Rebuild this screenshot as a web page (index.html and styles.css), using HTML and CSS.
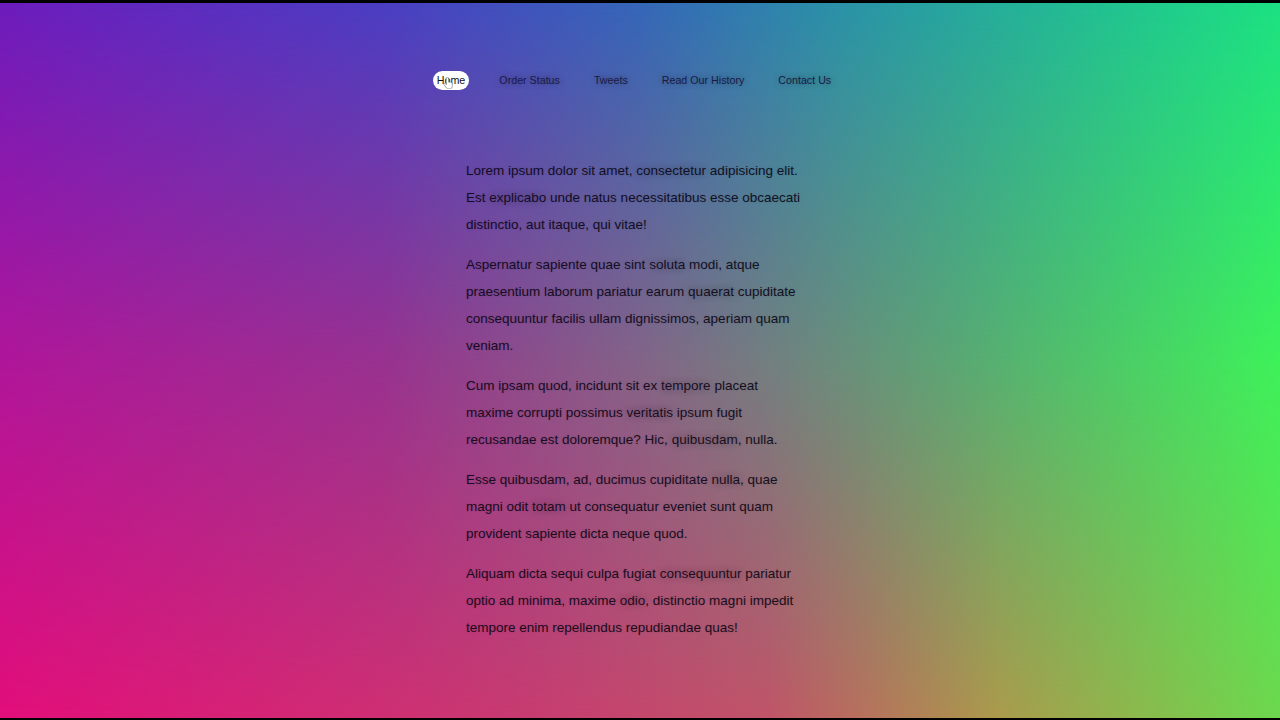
FILE: index.html
```html
<!DOCTYPE html>
<html lang="en">
<head>
<meta charset="utf-8">
<title>Home</title>
<link rel="stylesheet" href="styles.css">
</head>
<body>
<div class="frame">
  <nav class="nav">
    <a class="link active" href="#">Home<svg class="cursor" viewBox="0 0 12 14" width="10" height="12"><path d="M4 1.5c0-.8.6-1.5 1.3-1.5S6.6.7 6.6 1.5V6c.3-.4 1.3-.4 1.6.2.4-.3 1.3-.3 1.6.3.5-.2 1.3 0 1.3.8V11c0 1.8-1.3 3-3 3H6.3c-.9 0-1.6-.4-2.1-1.1L1.3 9c-.4-.6-.2-1.3.4-1.5.5-.2 1 0 1.3.4L4 9V1.5z" fill="#fff" stroke="#666" stroke-width=".7"/></svg></a>
    <a class="link" href="#">Order Status</a>
    <a class="link" href="#">Tweets</a>
    <a class="link" href="#">Read Our History</a>
    <a class="link" href="#">Contact Us</a>
  </nav>
  <main class="content">
    <p>Lorem ipsum dolor sit amet, <span class="hl">consectetur</span> adipisicing elit. Est <span class="hl">explicabo</span> unde natus necessitatibus esse obcaecati distinctio, aut itaque, qui vitae!</p>
    <p>Aspernatur sapiente quae sint <span class="hl">soluta</span> modi, atque praesentium laborum pariatur earum <span class="hl">quaerat</span> cupiditate consequuntur facilis ullam dignissimos, aperiam quam veniam.</p>
    <p>Cum ipsam quod, incidunt sit ex <span class="hl">tempore</span> placeat maxime corrupti possimus <span class="hl">veritatis</span> ipsum fugit recusandae est doloremque? Hic, <span class="hl">quibusdam</span>, nulla.</p>
    <p>Esse quibusdam, ad, ducimus cupiditate <span class="hl">nulla</span>, quae magni odit <span class="hl">totam</span> ut consequatur eveniet sunt quam provident sapiente dicta neque quod.</p>
    <p>Aliquam dicta sequi culpa fugiat <span class="hl">consequuntur</span> pariatur optio ad minima, maxime <span class="hl">odio</span>, distinctio magni impedit tempore enim repellendus repudiandae quas!</p>
  </main>
</div>
</body>
</html>
```

FILE: styles.css
```css
html, body {
  margin: 0;
  padding: 0;
  height: 100%;
}

body {
  background: #000;
  font-family: "Liberation Sans", Arial, sans-serif;
}

.frame {
  box-sizing: border-box;
  height: 720px;
  border-top: 3px solid #000;
  border-bottom: 2px solid #000;
  padding-right: 12px;
  position: relative;
  overflow: hidden;
  background: linear-gradient(to right, #b0169a 0%, #983290 30%, #836488 50%, #5aa874 75%, #3ef25a 100%);
}

.frame::before,
.frame::after {
  content: "";
  position: absolute;
  inset: 0;
  pointer-events: none;
}

.frame::before {
  background: linear-gradient(to right, #6c1cbc 0%, #4a3ec2 30%, #3466b8 50%, #2a90a8 65%, #1ce082 100%);
  -webkit-mask-image: linear-gradient(to bottom, #000 0%, transparent 50%);
  mask-image: linear-gradient(to bottom, #000 0%, transparent 50%);
}

.frame::after {
  background: linear-gradient(to right, #e20e7a 0%, #c83a70 40%, #c05468 60%, #aa9a4c 78%, #6cd84e 100%);
  -webkit-mask-image: linear-gradient(to bottom, transparent 50%, #000 100%);
  mask-image: linear-gradient(to bottom, transparent 50%, #000 100%);
}

.nav {
  position: relative;
  z-index: 1;
  display: flex;
  justify-content: center;
  gap: 26px;
  padding-top: 68px;
}

.link {
  position: relative;
  display: block;
  padding: 3px 4px;
  font-size: 10.7px;
  line-height: 13px;
  color: #1a1a44;
  text-decoration: none;
  border-radius: 10px;
  text-shadow: 0 0 6px rgba(0, 0, 0, 0.35);
}

.link.active {
  background: #fff;
  color: #111;
  text-shadow: none;
}

.cursor {
  position: absolute;
  left: 10px;
  top: 6px;
}

.content {
  position: relative;
  z-index: 1;
  width: 336px;
  margin: 0 auto;
  padding-top: 54px;
  font-size: 13.5px;
  line-height: 27px;
  color: rgba(10, 5, 20, 0.9);
  text-shadow: 0 0 2px rgba(0, 0, 0, 0.15);
}

.content p {
  margin: 13px 0;
}

.hl {
  text-shadow: 0 0 7px rgba(0, 0, 0, 0.35);
}
```
